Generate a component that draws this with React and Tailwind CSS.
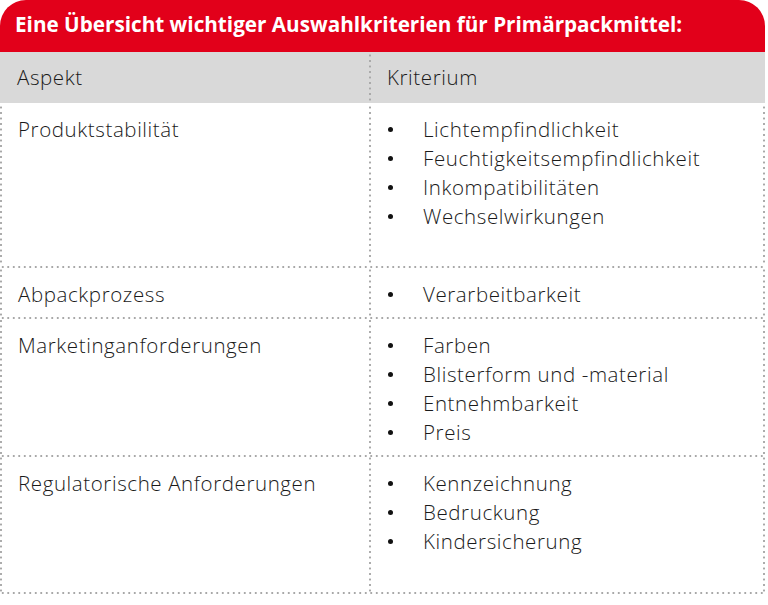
import React from 'react'

const rows = [
  { aspect: 'Produktstabilität', items: ['Lichtempfindlichkeit', 'Feuchtigkeitsempfindlichkeit', 'Inkompatibilitäten', 'Wechselwirkungen'], h: 'h-[163px]' },
  { aspect: 'Abpackprozess', items: ['Verarbeitbarkeit'], h: 'h-[49px]' },
  { aspect: 'Marketinganforderungen', items: ['Farben', 'Blisterform und -material', 'Entnehmbarkeit', 'Preis'], h: 'h-[136px]' },
  { aspect: 'Regulatorische Anforderungen', items: ['Kennzeichnung', 'Bedruckung', 'Kindersicherung'], h: 'h-[135px]' },
]

// dotted lines drawn as repeating dots
const hDots = 'h-[2px] w-full bg-[radial-gradient(circle,#a8a8a8_0.8px,transparent_1.1px)] bg-[length:5.5px_2px] bg-repeat-x'
const vDotsRight = 'bg-[radial-gradient(circle,#a8a8a8_0.8px,transparent_1.1px)] bg-[length:2px_5.5px] bg-repeat-y bg-right'

function Row({ aspect, items, h }) {
  return (
    <div className={`flex ${h} bg-[radial-gradient(circle,#a8a8a8_0.8px,transparent_1.1px)] bg-[length:2px_5.5px] bg-repeat-y bg-left`}>
      <div className={`w-[371px] pl-[18px] pt-[12px] leading-[29px] ${vDotsRight}`}>{aspect}</div>
      <ul className={`flex-1 pt-[12px] leading-[29px] ${vDotsRight}`}>
        {items.map((it) => (
          <li key={it} className="flex items-center">
            <span className="w-[52px] pl-[17px] flex items-center">
              <span className="block w-[5px] h-[5px] rounded-full bg-[#111]" />
            </span>
            <span>{it}</span>
          </li>
        ))}
      </ul>
    </div>
  )
}

export default function App() {
  return (
    <div className="w-[768px] h-[605px] bg-white text-[20.5px] font-[350] tracking-[0.6px] text-[#1a1a1a]" style={{ fontFamily: '"Open Sans", "Liberation Sans", sans-serif' }}>
      <div className="w-[765px]">
        <div className="h-[52px] bg-[#e2001a] rounded-t-[26px] pl-[15px] pt-[9px] text-white font-bold text-[20.7px] leading-[30px] tracking-normal">
          Eine Übersicht wichtiger Auswahlkriterien für Primärpackmittel:
        </div>
        <div className="flex h-[51px] bg-[#d9d9d9] items-center">
          <div className={`w-[371px] h-full pl-[17px] flex items-center ${vDotsRight}`}>Aspekt</div>
          <div className="flex-1 pl-[16px]">Kriterium</div>
        </div>
        {rows.map((r) => (
          <div key={r.aspect}>
            <Row {...r} />
            <div className={hDots} />
          </div>
        ))}
      </div>
    </div>
  )
}
